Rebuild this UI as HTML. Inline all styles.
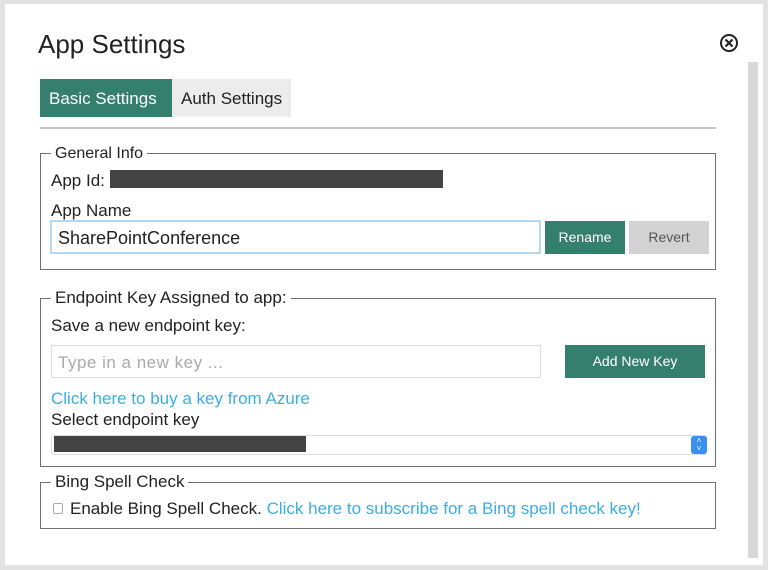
<!DOCTYPE html>
<html><head><style>
*{margin:0;padding:0;box-sizing:border-box}
body{width:768px;height:570px;background:#e2e2e2;font-family:"Liberation Sans",sans-serif;color:#222;position:relative;overflow:hidden}
.a{position:absolute}
#dlg{left:5px;top:4px;width:758px;height:561px;background:#fff}
.t{white-space:nowrap;line-height:1}
.fs{border:1.5px solid #6f6f6f}
.lg{background:#fff;padding:0 4px;font-size:17px;line-height:18px}
.btn{color:#fff;background:#357f6e;font-size:14px;text-align:center}
</style></head><body>
<div class="a" id="dlg"></div>
<div class="a" style="left:748px;top:62px;width:10px;height:496px;background:#d8d8d8"></div>
<div class="a t" style="left:38px;top:31px;font-size:26px">App Settings</div>
<svg class="a" style="left:719px;top:33px" width="20" height="20" viewBox="0 0 20 20"><circle cx="10" cy="10" r="8" fill="none" stroke="#222" stroke-width="2"/><path d="M6.5 6.5L13.5 13.5M13.5 6.5L6.5 13.5" stroke="#222" stroke-width="2.2"/></svg>
<div class="a" style="left:40px;top:79px;width:132px;height:38px;background:#357f6e"></div>
<div class="a t" style="left:49px;top:90px;font-size:17px;color:#fff">Basic Settings</div>
<div class="a" style="left:172px;top:79px;width:119px;height:38px;background:#ececec"></div>
<div class="a t" style="left:181px;top:90px;font-size:17px">Auth Settings</div>
<div class="a" style="left:40px;top:127px;width:676px;height:2px;background:#c4c4c4"></div>

<div class="a fs" style="left:40px;top:153px;width:676px;height:117px"></div>
<div class="a t lg" style="left:51px;top:145px;font-size:16px">General Info</div>
<div class="a t" style="left:51px;top:172px;font-size:17px">App Id:</div>
<div class="a" style="left:110px;top:170px;width:333px;height:18px;background:#444"></div>
<div class="a t" style="left:51px;top:202px;font-size:17px">App Name</div>
<div class="a" style="left:50px;top:220px;width:491px;height:34px;border:2px solid #b7d8f2;background:#fff"></div>
<div class="a t" style="left:58px;top:229px;font-size:18px">SharePointConference</div>
<div class="a btn" style="left:545px;top:221px;width:80px;height:33px;line-height:33px">Rename</div>
<div class="a btn" style="left:629px;top:221px;width:80px;height:33px;line-height:33px;background:#d2d2d2;color:#555">Revert</div>

<div class="a fs" style="left:40px;top:298px;width:676px;height:169px"></div>
<div class="a t lg" style="left:51px;top:289px">Endpoint Key Assigned to app:</div>
<div class="a t" style="left:51px;top:317px;font-size:17px">Save a new endpoint key:</div>
<div class="a" style="left:51px;top:345px;width:490px;height:33px;border:1px solid #ddd"></div>
<div class="a t" style="left:58px;top:354px;font-size:17px;color:#aaa;letter-spacing:0.5px">Type in a new key ...</div>
<div class="a btn" style="left:565px;top:345px;width:140px;height:33px;line-height:33px">Add New Key</div>
<div class="a t" style="left:51px;top:390px;font-size:17px;color:#3aaee6">Click here to buy a key from Azure</div>
<div class="a t" style="left:51px;top:411px;font-size:17px">Select endpoint key</div>
<div class="a" style="left:51px;top:435px;width:656px;height:20px;border:1px solid #ddd;border-radius:3px"></div>
<div class="a" style="left:54px;top:436px;width:252px;height:16px;background:#444"></div>
<div class="a" style="left:691px;top:436px;width:16px;height:18px;background:#3b8ff0;border-radius:3px;color:#fff;font-size:8px;text-align:center;line-height:8px;padding-top:1px">˄<br>˅</div>

<div class="a fs" style="left:40px;top:482px;width:676px;height:47px"></div>
<div class="a t lg" style="left:51px;top:473px">Bing Spell Check</div>
<div class="a" style="left:53px;top:503px;width:10px;height:11px;border:1px solid #aaa;border-radius:2px"></div>
<div class="a t" style="left:70px;top:500px;font-size:17px">Enable Bing Spell Check. <span style="color:#3aaee6">Click here to subscribe for a Bing spell check key!</span></div>
</body></html>
